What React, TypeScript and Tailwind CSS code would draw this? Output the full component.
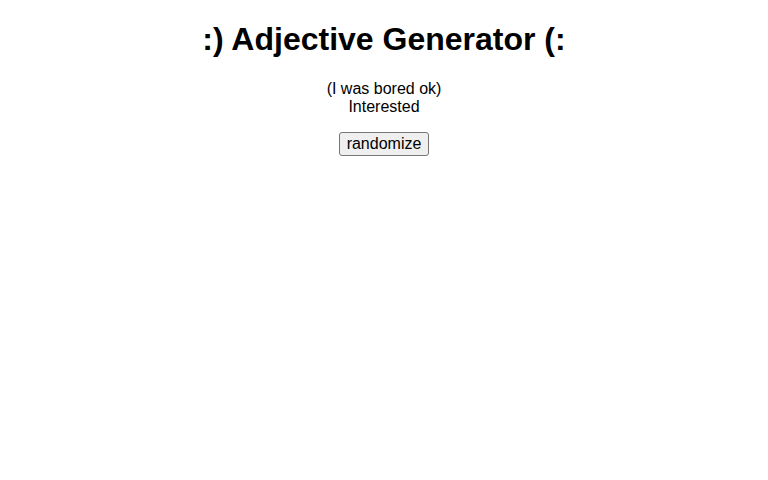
export default function App() {
  return (
    <div className="text-center text-black bg-white min-h-[480px]" style={{ fontFamily: '"Liberation Sans", Arial, sans-serif' }}>
      <h1 className="text-[32px] font-bold leading-[37px] pt-[21.44px] mb-[21.44px]">:) Adjective Generator (:</h1>
      <div className="text-[16px] leading-[18px]">
        <div>(I was bored ok)</div>
        <div>Interested</div>
      </div>
      <div className="mt-4">
        <button className="text-[16px] leading-[18px] px-[7px] py-[2px] bg-[#efefef] border border-[#767676] rounded-[3px]" style={{ fontFamily: '"Liberation Sans", Arial, sans-serif' }}>
          randomize
        </button>
      </div>
    </div>
  );
}
